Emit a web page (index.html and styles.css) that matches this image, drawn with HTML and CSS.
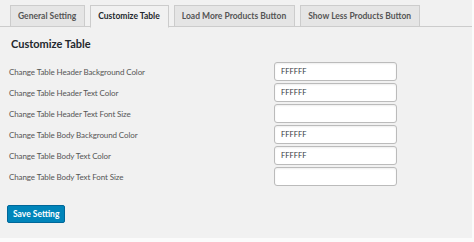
FILE: index.html
```html
<!DOCTYPE html>
<html lang="en">
<head>
    <meta charset="UTF-8">
    <title>Customize Table</title>

    <link rel="stylesheet" href="styles.css">
</head>
<body>
<div id="wrap">
    <div class="tabs">
        <a class="tab" href="#">General Setting</a>
        <a class="tab active" href="#">Customize Table</a>
        <a class="tab" href="#">Load More Products Button</a>
        <a class="tab" href="#">Show Less Products Button</a>
    </div>

    <h2 class="title">Customize Table</h2>

    <form class="settings">
        <div class="row">
            <label>Change Table Header Background Color</label>
            <input type="text" value="FFFFFF">
        </div>
        <div class="row">
            <label>Change Table Header Text Color</label>
            <input type="text" value="FFFFFF">
        </div>
        <div class="row">
            <label>Change Table Header Text Font Size</label>
            <input type="text" value="">
        </div>
        <div class="row">
            <label>Change Table Body Background Color</label>
            <input type="text" value="FFFFFF">
        </div>
        <div class="row">
            <label>Change Table Body Text Color</label>
            <input type="text" value="FFFFFF">
        </div>
        <div class="row">
            <label>Change Table Body Text Font Size</label>
            <input type="text" value="">
        </div>

        <button type="button" id="save">Save Setting</button>
    </form>
</div>
</body>
</html>
```

FILE: styles.css
```css
* {
    margin: 0;
    padding: 0;
    box-sizing: border-box;
}

html, body {
    background: #fbfbfb;
}

body {
    font-family: Lato, "Open Sans", sans-serif;
    color: #444;
}

#wrap {
    width: 472px;
    height: 238px;
    background: #f1f1f1;
    padding-top: 5px;
}

.tabs {
    display: flex;
    gap: 5px;
    padding-left: 10px;
    border-bottom: 1px solid #ccc;
    height: 22px;
}

.tab {
    display: block;
    flex-shrink: 0;
    white-space: nowrap;
    height: 22px;
    padding: 0 8px 0 7px;
    line-height: 20px;
    font-size: 8.5px;
    font-weight: 700;
    color: #555;
    text-decoration: none;
    background: #e5e5e5;
    border: 1px solid #ccc;
}

.tab.active {
    background: #f1f1f1;
    color: #23282d;
    border-bottom-color: #f1f1f1;
    height: 23px;
}

.title {
    font-size: 11px;
    font-weight: 700;
    color: #23282d;
    margin: 9px 0 0 11px;
    line-height: 16px;
}

.settings {
    padding: 9px 0 0 9px;
}

.row {
    display: flex;
    align-items: center;
    height: 21px;
}

.row label {
    width: 265px;
    font-size: 8px;
    letter-spacing: -0.1px;
    color: #555;
}

.row input {
    width: 123px;
    height: 19px;
    border: 1px solid #bbb;
    border-radius: 3px;
    background: #fff;
    padding: 0 6px;
    font-family: inherit;
    font-size: 7.5px;
    color: #32373c;
    box-shadow: inset 0 1px 2px rgba(0, 0, 0, 0.07);
}

#save {
    display: block;
    margin: 18px 0 0 -2px;
    height: 18px;
    padding: 0 5px;
    background: #0085ba;
    border: 1px solid #006799;
    border-radius: 2px;
    color: #fff;
    font-family: inherit;
    font-size: 8.5px;
    font-weight: 700;
}
```
